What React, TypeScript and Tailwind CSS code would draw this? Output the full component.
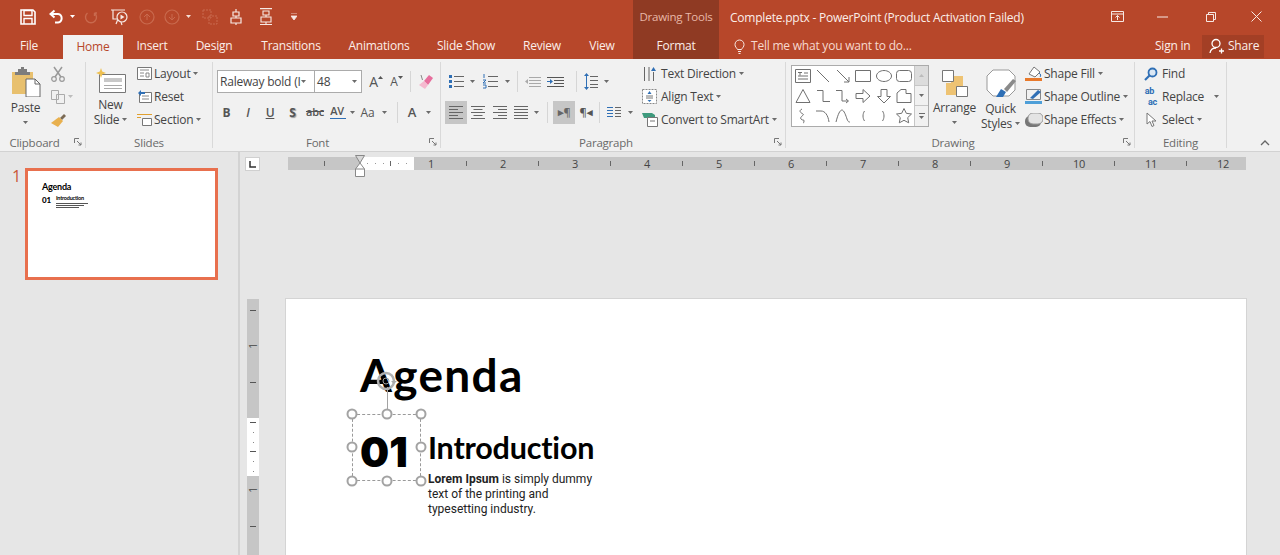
import type { ReactNode } from 'react';

const W = '#f7e9e4';
const G = '#5f5f5f';

function Svg({ w, h, children, className = '' }: { w: number; h: number; children: ReactNode; className?: string }) {
  return (
    <svg width={w} height={h} viewBox={`0 0 ${w} ${h}`} fill="none" className={`shrink-0 ${className}`}>
      {children}
    </svg>
  );
}

function Caret({ color = '#6b6b6b' }: { color?: string }) {
  return (
    <Svg w={5} h={3}>
      <path d="M0 0h5L2.500 3z" fill={color} />
    </Svg>
  );
}

function Launcher() {
  return (
    <Svg w={8} h={8}>
      <path d="M.5 5V.5H5" stroke="#777" />
      <path d="M3 3l4 4M7 4.500V7H4.500" stroke="#777" />
    </Svg>
  );
}

// one slot of a toolbar row, its width class sets where the icon lands
function Slot({ w, active, children }: { w: string; active?: boolean; children: ReactNode }) {
  return (
    <div className={`flex items-center justify-center shrink-0 h-[23px] ${w} ${active ? 'bg-[#c6c6c6]' : ''}`}>
      {children}
    </div>
  );
}

function Sep({ w }: { w: string }) {
  return (
    <div className={`flex justify-center shrink-0 ${w}`}>
      <div className="w-px h-[21px] bg-[#d6d6d6]" />
    </div>
  );
}

function Group({
  w,
  label,
  labelPad = '',
  launcher,
  children,
}: {
  w: string;
  label: string;
  labelPad?: string;
  launcher?: boolean;
  children: ReactNode;
}) {
  return (
    <div className={`flex shrink-0 h-full ${w}`}>
      <div className="flex-1 flex flex-col min-w-0">
        <div className="h-[75px] flex">{children}</div>
        <div className={`relative flex-1 flex items-center justify-center text-[11.5px] text-[#6a6a6a] pt-[2px] ${labelPad}`}>
          {label}
          {launcher && (
            <span className="absolute right-[3px] top-[6px] flex">
              <Launcher />
            </span>
          )}
        </div>
      </div>
      <div className="w-px h-[86px] mt-[2px] bg-[#d9d9d9]" />
    </div>
  );
}

function SmallRow({ icon, label, caret = true, iconW }: { icon: ReactNode; label: string; caret?: boolean; iconW: string }) {
  return (
    <div className="h-[23px] flex items-center text-[12px] text-[#444] whitespace-nowrap">
      <span className={`flex justify-center shrink-0 ${iconW}`}>{icon}</span>
      <span>{label}</span>
      {caret && (
        <span className="ml-[3px] flex">
          <Caret />
        </span>
      )}
    </div>
  );
}

function LargeLabel({ lines, caretLine }: { lines: string[]; caretLine?: boolean }) {
  return (
    <div className="flex flex-col items-center text-[12px] leading-[15px] text-[#444] mt-[3px]">
      {lines.map((l, i) => (
        <div key={l} className="flex items-center whitespace-nowrap">
          {l}
          {caretLine && i === lines.length - 1 && (
            <span className="ml-[3px] flex">
              <Caret />
            </span>
          )}
        </div>
      ))}
      {!caretLine && (
        <div className="h-[15px] flex items-center">
          <Caret />
        </div>
      )}
    </div>
  );
}

/* ---------- title bar icons ---------- */

function QuickAccess() {
  const dim = '#c96a4e';
  return (
    <div className="h-[33px] flex items-center">
      <div className="w-[20px] shrink-0" />
      <Svg w={16} h={16}>
        <path d="M1 1h12l2 2v12H1z" stroke="#fff" strokeWidth="1.600" />
        <path d="M4 1.500h8v5H4zM4 15V9.500h8V15" stroke="#fff" strokeWidth="1.400" />
      </Svg>
      <div className="w-[13px] shrink-0" />
      <Svg w={16} h={15}>
        <path d="M5.500 1.500L1.500 5l4 3.500" stroke="#fff" strokeWidth="2" />
        <path d="M2 5h7a4.300 4.300 0 010 8.500H6" stroke="#fff" strokeWidth="2" />
      </Svg>
      <div className="w-[5px] shrink-0" />
      <Caret color="#fff" />
      <div className="w-[9px] shrink-0" />
      <Svg w={14} h={14}>
        <path d="M3.500 3a5.500 5.500 0 107 0M10.500 3v3M10.500 3H13" stroke={dim} strokeWidth="1.400" />
      </Svg>
      <div className="w-[12px] shrink-0" />
      <Svg w={19} h={18}>
        <path d="M1 2h14M3 2v9h6M8 11l-2 5M11 14l1 3" stroke={W} strokeWidth="1.200" />
        <circle cx="12" cy="9" r="5" stroke={W} strokeWidth="1.200" fill="#b7472a" />
        <path d="M10.500 6.500l4 2.500-4 2.500z" fill={W} />
      </Svg>
      <div className="w-[10px] shrink-0" />
      <Svg w={16} h={16}>
        <circle cx="8" cy="8" r="7" stroke={dim} strokeWidth="1.200" />
        <path d="M5 8l3-3 3 3M8 5v6" stroke={dim} />
      </Svg>
      <div className="w-[9px] shrink-0" />
      <Svg w={16} h={16}>
        <circle cx="8" cy="8" r="7" stroke={dim} strokeWidth="1.200" />
        <path d="M5 8l3 3 3-3M8 11V5" stroke={dim} />
      </Svg>
      <div className="w-[6px] shrink-0" />
      <Caret color="#f5dfd6" />
      <div className="w-[11px] shrink-0" />
      <Svg w={16} h={16}>
        <path d="M1 1h8v8H1zM7 7h8v8H7z" stroke={dim} strokeDasharray="2 1" />
      </Svg>
      <div className="w-[12px] shrink-0" />
      <Svg w={12} h={16}>
        <path d="M6 0v3M6 7v2M6 14v2M3 3h6v4H3zM1 9h10v5H1z" stroke={W} strokeWidth="1.200" />
      </Svg>
      <div className="w-[18px] shrink-0" />
      <Svg w={12} h={17}>
        <path d="M0 .6h12M3 3h6v4H3zM1 9h10v5H1zM6 7v2M6 14v3M0 16.500h12" stroke={W} strokeWidth="1.100" />
      </Svg>
      <div className="w-[19px] shrink-0" />
      <Svg w={6} h={7}>
        <path d="M0 0h6M0 3h6L3 7z" stroke={W} fill={W} strokeWidth=".8" />
      </Svg>
    </div>
  );
}

function Tab({ w, label }: { w: string; label: string }) {
  return <div className={`text-[12px] text-[#fbeee9] text-center shrink-0 whitespace-nowrap ${w}`}>{label}</div>;
}

function WindowButtons() {
  return (
    <div className="flex items-center h-[33px]">
      <div className="w-[392px] shrink-0" />
      <Svg w={13} h={11}>
        <path d="M.5.500h12v10H.5zM.5 3h12" stroke={W} />
        <path d="M6.500 9V4.500M4.500 6.500l2-2 2 2" stroke={W} />
      </Svg>
      <div className="w-[33px] shrink-0" />
      <Svg w={11} h={2}>
        <path d="M0 1h11" stroke={W} />
      </Svg>
      <div className="w-[38px] shrink-0" />
      <Svg w={10} h={10}>
        <path d="M.5 2.500h7v7h-7zM2.500 2.500v-2h7v7h-2" stroke={W} />
      </Svg>
      <div className="w-[35px] shrink-0" />
      <Svg w={11} h={11}>
        <path d="M.5.500l10 10M10.500.500l-10 10" stroke={W} />
      </Svg>
    </div>
  );
}

function Header() {
  return (
    <div className="flex h-[59px] bg-[#b7472a] shrink-0">
      <div className="w-[633px] shrink-0 flex flex-col">
        <QuickAccess />
        <div className="flex items-center h-[26px]">
          <Tab w="w-[58px]" label="File" />
          <div className="w-[60px] h-[24px] mt-[2px] ml-[5px] bg-[#f1f1f1] text-[#b7472a] text-[12px] flex items-center justify-center shrink-0">
            Home
          </div>
          <Tab w="w-[58px]" label="Insert" />
          <Tab w="w-[66px]" label="Design" />
          <Tab w="w-[88px]" label="Transitions" />
          <Tab w="w-[88px]" label="Animations" />
          <Tab w="w-[86px]" label="Slide Show" />
          <Tab w="w-[66px]" label="Review" />
          <Tab w="w-[54px]" label="View" />
        </div>
      </div>
      <div className="w-[86px] shrink-0 bg-[#8f3a23] flex flex-col">
        <div className="h-[33px] flex items-center justify-center text-[11.5px] text-[#e8b8a8]">Drawing Tools</div>
        <div className="h-[26px] flex items-center justify-center text-[12px] text-[#fbeee9]">Format</div>
      </div>
      <div className="flex-1 flex flex-col min-w-0">
        <div className="relative h-[33px]">
          <div className="absolute left-[11px] top-[9px] text-[12px] text-[#fbeee9] whitespace-nowrap">
            Complete.pptx - PowerPoint (Product Activation Failed)
          </div>
          <WindowButtons />
        </div>
        <div className="h-[26px] flex items-center text-[12px] text-[#f6d9cf]">
          <div className="w-[15px] shrink-0" />
          <Svg w={11} h={15} className="mr-[6px]">
            <path d="M3.500 10.500C2.500 8.500 1 8 1 5.500a4.500 4.500 0 019 0c0 2.500-1.500 3-2.500 5zM4 12.500h3M4.500 14.500h2" stroke={W} />
          </Svg>
          <span className="whitespace-nowrap w-[404px] shrink-0">Tell me what you want to do...</span>
          <span className="text-[#fbeee9] whitespace-nowrap w-[47px] shrink-0">Sign in</span>
          <div className="w-[62px] h-[23px] bg-[#a33f25] flex items-center text-[#fbeee9] shrink-0">
            <Svg w={16} h={16} className="ml-[7px] mr-[3px]">
              <circle cx="7" cy="5.500" r="4" stroke="#fff" strokeWidth="1.300" />
              <path d="M1 15c.5-3.500 2.500-5 6-5M10 13h5M12.500 10.500v5" stroke="#fff" strokeWidth="1.300" />
            </Svg>
            Share
          </div>
        </div>
      </div>
    </div>
  );
}

/* ---------- ribbon icons ---------- */

const lines = (ys: number[], x1: number, x2: number, c = G) => (
  <path d={ys.map((y) => `M${x1} ${y}.5H${x2}`).join('')} stroke={c} />
);

function ListIcon({ kind }: { kind: 'bullet' | 'num' }) {
  return (
    <Svg w={16} h={15}>
      {lines([2, 7, 12], 6, 16, '#666')}
      {kind === 'bullet' ? (
        <path d="M1 1h3v3H1zM1 6h3v3H1zM1 11h3v3H1z" fill="#2f6fb5" />
      ) : (
        <path d="M2 0v4M1 6h3l-3 3h3M1 11h3v3H1" stroke="#2f6fb5" />
      )}
    </Svg>
  );
}

function AlignIcon({ kind }: { kind: 'l' | 'c' | 'r' | 'j' }) {
  const rows = [1, 4, 7, 10, 13];
  const long = [true, false, true, false, true];
  const d = rows
    .map((y, i) => {
      const len = long[i] || kind === 'j' ? 14 : 9;
      const x = kind === 'c' ? (14 - len) / 2 : kind === 'r' ? 14 - len : 0;
      return `M${x} ${y}.5h${len}`;
    })
    .join('');
  return (
    <Svg w={14} h={15}>
      <path d={d} stroke="#666" />
    </Svg>
  );
}

function Shape({ d }: { d: string }) {
  return (
    <div className="flex items-center justify-center w-[20px] h-[20px]">
      <Svg w={16} h={16}>
        <path d={d} stroke="#707070" />
      </Svg>
    </div>
  );
}

const shapes = [
  'M.5 1.500h15v13H.5zM3 4.500h4M5 4.500v3M9 5h4M3 8h10M3 11h10',
  'M2 2l12 12',
  'M2 2l12 12M14 9v5H9',
  'M.5 2.500h15v11H.5z',
  'M8 2.500c4 0 7.500 2.500 7.500 5.500s-3.500 5.500-7.500 5.500S.5 11 .5 8 4 2.500 8 2.500z',
  'M3.500 2.500h9a3 3 0 013 3v5a3 3 0 01-3 3h-9a3 3 0 01-3-3v-5a3 3 0 013-3z',
  'M8 1.500l7 13H1z',
  'M2 2.500h6v11h7',
  'M1 2.500h6v10.500h6M11 11l2.500 2-2.500 2',
  'M1 5.500h7v-4l7 6.500-7 6.500v-4H1z',
  'M5 1.500h6v7h3.500L8 15 1.500 8.500H5z',
  'M1 14.500V5l4-3.500h5v4h5v9z',
  'M7 1C3 3 6 5 8 6S4 9 6 11s3 0 3 2-1 2-1 2',
  'M1 3h5c4 0 7 4 8 11',
  'M1 14C3 6 5 2 7 2s4 6 5 9 2 3 3 3',
  'M9.500 3C7.500 6 7.500 10 9.500 13',
  'M6.500 3c2 3 2 7 0 10',
  'M8 .5l2.300 4.800 5.200.7-3.800 3.600 1 5.200L8 12.300l-4.700 2.500 1-5.200L.5 6l5.200-.7z',
];

function Gallery() {
  return (
    <div className="flex h-[62px] w-[138px] mt-[5px] ml-[5px] border border-[#ababab] bg-white">
      <div className="w-[122px] pl-[1px] grid grid-cols-6 auto-rows-[20px]">
        {shapes.map((d) => (
          <Shape key={d} d={d} />
        ))}
      </div>
      <div className="w-[14px] ml-auto flex flex-col border-l border-[#c6c6c6] bg-[#f1f1f1]">
        <div className="h-[20px] bg-[#dcdcdc] flex items-center justify-center border-b border-[#c6c6c6]">
          <Svg w={5} h={3}>
            <path d="M0 3h5L2.500 0z" fill="#bbb" />
          </Svg>
        </div>
        <div className="h-[20px] flex items-center justify-center border-b border-[#c6c6c6]">
          <Caret />
        </div>
        <div className="flex-1 flex flex-col gap-[2px] items-center justify-center">
          <div className="w-[6px] h-px bg-[#6b6b6b]" />
          <Caret />
        </div>
      </div>
    </div>
  );
}

function Ribbon() {
  return (
    <div className="flex h-[93px] shrink-0 bg-[#f1f1f1] border-b border-[#d2d2d2] pt-[1px]">
      <Group w="w-[86px]" label="Clipboard" labelPad="pr-[16px]" launcher>
        <div className="w-[51px] flex flex-col items-center pt-[7px]">
          <Svg w={30} h={30}>
            <path d="M1 5h21v22H1z" fill="#e8c06e" />
            <path d="M7 5V2h3V0h3v2h3v3h3v3H4V5z" fill="#7d7d7d" />
            <path d="M15 12h9l5 5v13H15z" fill="#fff" stroke="#666" />
            <path d="M24 12v5h5" stroke="#666" />
          </Svg>
          <LargeLabel lines={['Paste']} />
        </div>
        <div className="flex flex-col pt-[2px]">
          <Slot w="w-[14px]">
            <Svg w={14} h={16}>
              <path d="M3 1l7 10M11 1L4 11" stroke="#9a9a9a" strokeWidth="1.500" />
              <circle cx="3" cy="13" r="2.300" stroke="#9a9a9a" strokeWidth="1.200" />
              <circle cx="11" cy="13" r="2.300" stroke="#9a9a9a" strokeWidth="1.200" />
            </Svg>
          </Slot>
          <div className="flex items-center">
            <Slot w="w-[14px]">
              <Svg w={14} h={14}>
                <path d="M.5.500h7v9h-7zM5.500 4.500h8v9h-8z" stroke="#ababab" />
              </Svg>
            </Slot>
            <span className="ml-[3px] flex">
              <Caret color="#bdbdbd" />
            </span>
          </div>
          <Slot w="w-[14px]">
            <Svg w={16} h={14}>
              <path d="M10 5l4-4 2 2-4 4z" fill="#7b6a55" />
              <path d="M1 10l8-6 4 4-5 6z" fill="#e8b04e" />
            </Svg>
          </Slot>
        </div>
      </Group>

      <Group w="w-[127px]" label="Slides">
        <div className="w-[47px] ml-px flex flex-col items-center pt-[8px]">
          <Svg w={30} h={26}>
            <path d="M3.500 6.500h26v18h-26z" fill="#fff" stroke="#777" />
            <path d="M8 10h18v4H8z" fill="#c8c8c8" />
            <path d="M8 17.500h18M8 20.500h18" stroke="#aaa" />
            <path d="M5 0l1.200 3.500L10 5 6.200 6.500 5 10 3.800 6.500 0 5l3.800-1.500z" fill="#efc050" />
          </Svg>
          <LargeLabel lines={['New', 'Slide']} caretLine />
        </div>
        <div className="flex flex-col pt-[2px]">
          <SmallRow
            iconW="w-[20px]"
            label="Layout"
            icon={
              <Svg w={15} h={13}>
                <path d="M.5.500h14v12H.5z" fill="#fff" stroke="#777" />
                <path d="M3 3h9M3 6h4M3 9h4M9 6h3v4H9z" stroke="#888" />
              </Svg>
            }
          />
          <SmallRow
            iconW="w-[20px]"
            label="Reset"
            caret={false}
            icon={
              <Svg w={15} h={13}>
                <path d="M2.500 2.500h12v10h-12z" fill="#fff" stroke="#777" />
                <path d="M5 6h7M5 9h7" stroke="#888" />
                <path d="M1 3l3-3v2h4v2H4v2z" fill="#2f6fb5" />
              </Svg>
            }
          />
          <SmallRow
            iconW="w-[20px]"
            label="Section"
            icon={
              <Svg w={15} h={13}>
                <path d="M0 1.500h15M0 4.500h4" stroke="#e0a030" />
                <path d="M5.500 5.500h9v7h-9z" fill="#fff" stroke="#777" />
              </Svg>
            }
          />
        </div>
      </Group>

      <Group w="w-[228px]" label="Font" labelPad="pr-[18px]" launcher>
        <div className="flex flex-col pl-[3px] pt-[10px]">
          <div className="flex items-center h-[23px] whitespace-nowrap">
            <div className="flex w-[145px] h-[23px] ml-px bg-white border border-[#ababab] text-[12px] text-[#444]">
              <div className="w-[97px] border-r border-[#ababab] flex items-center pl-[2px] pr-[5px] overflow-hidden">
                <span className="overflow-hidden w-[81px] shrink-0">Raleway bold (I</span>
                <Caret />
              </div>
              <div className="flex-1 flex items-center justify-between pl-[2px] pr-[4px]">
                48
                <Caret />
              </div>
            </div>
            <Slot w="w-[22px]">
              <span className="text-[14px] text-[#555] ml-[6px]">A</span>
              <Svg w={5} h={3} className="mb-[8px]">
                <path d="M0 3h5L2.500 0z" fill="#555" />
              </Svg>
            </Slot>
            <Slot w="w-[21px]">
              <span className="text-[12px] text-[#555] ml-[4px]">A</span>
              <Svg w={5} h={3} className="mb-[8px]">
                <path d="M0 0h5L2.500 3z" fill="#555" />
              </Svg>
            </Slot>
            <Sep w="w-[10px]" />
            <Slot w="w-[20px]">
              <Svg w={15} h={15}>
                <path d="M6 7l5-6 4 3-5 7z" fill="#e76e9d" />
                <path d="M6 7l4 4-3 4-6-4z" fill="#f5b9cf" />
                <path d="M3 1l1.500 5" stroke="#888" />
              </Svg>
            </Slot>
          </div>
          <div className="flex items-center h-[23px] mt-[8px] text-[12px] text-[#555] whitespace-nowrap">
            <Slot w="w-[21px]"><b>B</b></Slot>
            <Slot w="w-[22px]"><i className="font-semibold">I</i></Slot>
            <Slot w="w-[22px]"><u className="font-semibold">U</u></Slot>
            <Slot w="w-[23px]"><b className="[text-shadow:1px_1px_1px_#999]">S</b></Slot>
            <Slot w="w-[22px]"><s className="text-[11px] font-semibold">abc</s></Slot>
            <Slot w="w-[22px]">
              <span className="relative font-semibold text-[11px] -mt-[3px]">
                AV
                <Svg w={16} h={3} className="absolute left-0 top-[14px]">
                  <path d="M0 1.500h16" stroke="#2f6fb5" />
                </Svg>
              </span>
            </Slot>
            <Slot w="w-[9px]"><Caret /></Slot>
            <Slot w="w-[21px]">Aa</Slot>
            <Slot w="w-[12px]"><Caret /></Slot>
            <Sep w="w-[14px]" />
            <Slot w="w-[16px]"><span className="font-semibold text-[13px]">A</span></Slot>
            <Slot w="w-[16px]"><Caret /></Slot>
          </div>
        </div>
      </Group>

      <Group w="w-[345px]" label="Paragraph" labelPad="pr-[14px]" launcher>
        <div className="flex flex-col pl-[4px] pt-[10px] w-[199px] shrink-0">
          <div className="flex items-center h-[23px]">
            <Slot w="w-[22px]"><ListIcon kind="bullet" /></Slot>
            <Slot w="w-[10px]"><Caret /></Slot>
            <Slot w="w-[26px]"><ListIcon kind="num" /></Slot>
            <Slot w="w-[8px]"><Caret /></Slot>
            <Sep w="w-[12px]" />
            <Slot w="w-[18px]">
              <Svg w={17} h={12}>
                {lines([1, 4, 7, 10], 5, 17, '#a9a9a9')}
                <path d="M4 3L1 5.500 4 8z" fill="#a9a9a9" />
              </Svg>
            </Slot>
            <Slot w="w-[28px]">
              <Svg w={17} h={12}>
                {lines([1, 10], 0, 17, '#555')}
                {lines([4, 7], 7, 17, '#555')}
                <path d="M0 5.500h4" stroke="#2f6fb5" />
                <path d="M3 3l3 2.500L3 8z" fill="#2f6fb5" />
              </Svg>
            </Slot>
            <Sep w="w-[14px]" />
            <Slot w="w-[16px]">
              <Svg w={14} h={17}>
                <path d="M2.500 1v15" stroke="#2f6fb5" />
                <path d="M0 3l2.500-3L5 3zM0 14l2.500 3L5 14z" fill="#2f6fb5" />
                {lines([3, 7, 11, 14], 6, 14, '#666')}
              </Svg>
            </Slot>
            <Slot w="w-[14px]"><Caret /></Slot>
          </div>
          <div className="flex items-center h-[23px] mt-[8px]">
            <Slot w="w-[22px]" active><AlignIcon kind="l" /></Slot>
            <Slot w="w-[22px]"><AlignIcon kind="c" /></Slot>
            <Slot w="w-[22px]"><AlignIcon kind="r" /></Slot>
            <Slot w="w-[20px]"><AlignIcon kind="j" /></Slot>
            <Slot w="w-[10px]"><Caret /></Slot>
            <Sep w="w-[12px]" />
            <Slot w="w-[22px]" active>
              <span className="text-[11px] text-[#666] font-semibold">▸¶</span>
            </Slot>
            <Slot w="w-[22px]">
              <span className="text-[11px] text-[#555] font-semibold">¶◂</span>
            </Slot>
            <Sep w="w-[5px]" />
            <Slot w="w-[24px]">
              <Svg w={14} h={11}>
                {lines([0, 3, 6, 9], 0, 6, '#2f6fb5')}
                {lines([0, 3, 6, 9], 8, 14, '#666')}
              </Svg>
            </Slot>
            <Slot w="w-[8px]"><Caret /></Slot>
          </div>
        </div>
        <div className="flex flex-col pt-[2px] ml-[-2px]">
          <SmallRow
            iconW="w-[23px]"
            label="Text Direction"
            icon={
              <Svg w={15} h={16}>
                <path d="M2.500 1v14M7 1v14M11.500 6v9" stroke="#666" />
                <path d="M9 5l2.500-4L14 5z" fill="#2f6fb5" />
              </Svg>
            }
          />
          <SmallRow
            iconW="w-[23px]"
            label="Align Text"
            icon={
              <Svg w={15} h={15}>
                <path d="M.5.500h14v14H.5z" fill="#fff" stroke="#888" strokeDasharray="2 1" />
                <path d="M4 7h7M4 9h7" stroke="#777" />
                <path d="M7.500 2l2 3h-4zM7.500 13l2-2h-4z" fill="#2f6fb5" />
              </Svg>
            }
          />
          <SmallRow
            iconW="w-[23px]"
            label="Convert to SmartArt"
            icon={
              <Svg w={16} h={15}>
                <path d="M0 1h10l3 2v3H2z" fill="#3e9a7d" />
                <path d="M5.500 5.500h10v9h-10z" fill="#fff" stroke="#777" />
                <path d="M8 9h5" stroke="#777" />
              </Svg>
            }
          />
        </div>
      </Group>

      <Group w="w-[349px]" label="Drawing" labelPad="pr-[14px]" launcher>
        <Gallery />
        <div className="w-[53px] ml-[-1px] flex flex-col items-center pt-[9px] shrink-0">
          <Svg w={28} h={28}>
            <path d="M10 7h12v13H10z" fill="#eec373" />
            <path d="M5 14h12v12H5z" fill="#eec373" />
            <path d="M1.500 1.500h11v11h-11z" fill="#fff" stroke="#777" />
            <path d="M15.500 17.500h11v10h-11z" fill="#fff" stroke="#777" />
          </Svg>
          <LargeLabel lines={['Arrange']} />
        </div>
        <div className="w-[39px] flex flex-col items-center pt-[9px] shrink-0">
          <Svg w={30} h={29}>
            <path d="M7 1h16l6 6v14l-6 6H7l-6-6V7z" fill="#fff" stroke="#999" />
            <path d="M10 28l5-8 5 3-3 5z" fill="#2f6fb5" />
            <path d="M18 20l9-10 3 2-9 11z" fill="#8a8a8a" />
          </Svg>
          <LargeLabel lines={['Quick', 'Styles']} caretLine />
        </div>
        <div className="flex flex-col pt-[2px] ml-[3px]">
          <SmallRow
            iconW="w-[21px]"
            label="Shape Fill"
            icon={
              <Svg w={18} h={17}>
                <path d="M4 9l5-7 6 5-5 5z" fill="#fff" stroke="#777" />
                <path d="M14 8c2 1 2 3 1 4" stroke="#2f6fb5" />
                <path d="M0 13h17v3H0z" fill="#e8792b" />
              </Svg>
            }
          />
          <SmallRow
            iconW="w-[21px]"
            label="Shape Outline"
            icon={
              <Svg w={18} h={17}>
                <path d="M1.500 1.500h14v10h-14z" stroke="#888" />
                <path d="M5 10l8-8 3 2-8 7z" fill="#2f6fb5" />
                <path d="M0 13h17v3H0z" fill="#4e9fd8" />
              </Svg>
            }
          />
          <SmallRow
            iconW="w-[21px]"
            label="Shape Effects"
            icon={
              <Svg w={18} h={14}>
                <rect x="0" y="3" width="16" height="11" rx="5" fill="#777" />
                <rect x="3" y="0" width="15" height="11" rx="5" fill="#e4e4e4" stroke="#999" />
              </Svg>
            }
          />
        </div>
      </Group>

      <Group w="w-[92px]" label="Editing">
        <div className="flex flex-col pt-[2px] pl-[5px]">
          <SmallRow
            iconW="w-[22px]"
            label="Find"
            caret={false}
            icon={
              <Svg w={14} h={14}>
                <circle cx="8.500" cy="5.500" r="4" fill="#dbe8f5" stroke="#2f6fb5" strokeWidth="1.800" />
                <path d="M5.500 8.500L1 13" stroke="#2f6fb5" strokeWidth="2.200" />
              </Svg>
            }
          />
          <div className="flex items-center">
            <SmallRow
              iconW="w-[22px]"
              label="Replace"
              caret={false}
              icon={
                <span className="flex flex-col items-center font-['Roboto',sans-serif] text-[9px] leading-[11px] font-bold text-[#2f6fb5]">
                  <span className="-ml-[3px]">ab</span>
                  <span className="ml-[3px]">ac</span>
                </span>
              }
            />
            <span className="ml-[10px] flex">
              <Caret />
            </span>
          </div>
          <SmallRow
            iconW="w-[22px]"
            label="Select"
            icon={
              <Svg w={11} h={15}>
                <path d="M1 1v11l3-2.500 2 5 2-1-2-4.500h4z" fill="#fff" stroke="#777" />
              </Svg>
            }
          />
        </div>
      </Group>

      <div className="flex-1 flex items-end justify-end pr-[10px] pb-[5px]">
        <Svg w={10} h={6}>
          <path d="M1 5l4-4 4 4" stroke="#666" strokeWidth="1.300" />
        </Svg>
      </div>
    </div>
  );
}

/* ---------- rulers ---------- */

function HRuler() {
  const nums = [1, 2, 3, 4, 5, 6, 7, 8, 9, 10, 11, 12];
  return (
    <div className="flex h-[13px] w-[958px] bg-[#c6c6c6] text-[11px] leading-[13px] text-[#444]">
      <div className="w-[72px] shrink-0 flex items-center justify-center">
        <div className="w-px h-[5px] bg-[#666]" />
      </div>
      <div className="w-[54px] shrink-0 bg-white flex items-center justify-around px-[4px]">
        <div className="w-px h-px bg-[#999]" />
        <div className="w-px h-px bg-[#999]" />
        <div className="w-px h-px bg-[#999]" />
        <div className="w-px h-[5px] bg-[#666]" />
        <div className="w-px h-px bg-[#999]" />
        <div className="w-px h-px bg-[#999]" />
      </div>
      <div className="flex-1 flex min-w-0 overflow-hidden">
        <div className="flex shrink-0 -ml-[19px]">
          {nums.map((n) => (
            <div key={n} className="relative w-[72px] text-center">
              {n}
              <div className="absolute right-0 top-[4px] w-px h-[5px] bg-[#666]" />
            </div>
          ))}
        </div>
      </div>
    </div>
  );
}

function VCell({ num }: { num?: boolean }) {
  return (
    <div className="h-[36px] shrink-0 flex items-center justify-center">
      {num ? <span className="-rotate-90 text-[10px] leading-[10px] text-[#444]">1</span> : <div className="w-[6px] h-px bg-[#555]" />}
    </div>
  );
}

function VRuler() {
  return (
    <div className="w-[12px] flex flex-col h-[256px] bg-[#c6c6c6] shrink-0 overflow-hidden">
      <div className="h-[119px] shrink-0 overflow-hidden">
        <div className="-mt-[7px]">
          <VCell />
          <VCell num />
          <VCell />
        </div>
      </div>
      <div className="h-[58px] shrink-0 bg-white flex flex-col items-center justify-between py-[4px]">
        <div className="w-[6px] h-px bg-[#555]" />
        <div className="w-px h-px bg-[#888]" />
        <div className="w-px h-px bg-[#888]" />
        <div className="w-[6px] h-px bg-[#555]" />
        <div className="w-px h-px bg-[#888]" />
        <div className="w-px h-px bg-[#888]" />
      </div>
      <div className="flex-1 min-h-0">
        <div className="-mt-[4px]">
          <VCell num />
          <VCell />
        </div>
      </div>
    </div>
  );
}

/* ---------- slide canvas ---------- */

function Handle({ x, y }: { x: number; y: number }) {
  return (
    <div
      className="absolute w-[11px] h-[11px] rounded-full bg-white border-2 border-[#a3a3a3] -translate-x-1/2 -translate-y-1/2"
      style={{ left: x, top: y }}
    />
  );
}

function Slide() {
  const handles = [
    [66, 115],
    [101, 115],
    [135, 115],
    [66, 148],
    [135, 148],
    [66, 182],
    [101, 182],
    [135, 182],
  ];
  return (
    <div className="relative flex-1 h-[260px] bg-white border border-[#d4d4d4] tracking-normal">
      <div className="absolute left-[74px] top-[48px] font-['Lato',sans-serif] font-bold text-[46px] leading-[56px] tracking-[1.3px] text-black">
        Agenda
      </div>
      <div className="absolute left-[74px] top-[128px] font-['Inter',sans-serif] font-black text-[41px] leading-[50px] text-black">
        01
      </div>
      <div className="absolute left-[142px] top-[129px] font-['Lato',sans-serif] font-bold text-[30.5px] leading-[38px] tracking-[-0.2px] text-black">
        Introduction
      </div>
      <div className="absolute left-[142px] top-[173px] w-[172px] font-['Roboto',sans-serif] text-[12px] leading-[15px] text-[#222]">
        <b>Lorem Ipsum</b> is simply dummy text of the printing and typesetting industry.
      </div>

      <div className="absolute left-[66px] top-[115px] w-[69px] h-[67px] border border-dashed border-[#9a9a9a]" />
      <div className="absolute left-[101px] top-[88px] w-px h-[27px] bg-[#a3a3a3]" />
      <Svg w={22} h={20} className="absolute left-[90px] top-[72px]">
        <circle cx="10" cy="10" r="8" stroke="#b0b0b0" strokeWidth="2.500" />
        <circle cx="10" cy="10" r="3" stroke="#a0a0a0" />
        <path d="M15 10h6l-3 3z" fill="#aaa" />
      </Svg>
      {handles.map(([x, y]) => (
        <Handle key={`${x}-${y}`} x={x} y={y} />
      ))}
    </div>
  );
}

function Thumbnail() {
  return (
    <div className="flex pt-[16px]">
      <div className="w-[24px] shrink-0 pl-[12px] text-[16px] leading-[17px] text-[#c9573a]">1</div>
      <div className="w-[193px] h-[112px] ml-px border-[3px] border-[#e8704e] bg-white shrink-0 pl-[14px] pt-[10px] font-['Lato',sans-serif]">
        <div className="text-[9px] leading-[12px] font-bold text-black">Agenda</div>
        <div className="flex mt-[2px]">
          <div className="text-[8px] leading-[10px] font-black text-black w-[14px]">01</div>
          <div className="flex flex-col gap-[1px]">
            <div className="text-[5.500px] leading-[7px] font-bold text-black">Introduction</div>
            <div className="w-[32px] h-px bg-[#555]" />
            <div className="w-[28px] h-px bg-[#555]" />
            <div className="w-[23px] h-px bg-[#555]" />
          </div>
        </div>
      </div>
    </div>
  );
}

export default function App() {
  return (
    <div className="w-[1280px] h-[555px] overflow-hidden flex flex-col bg-[#e6e6e6] font-['Open_Sans',sans-serif] tracking-[-0.22px]">
      <Header />
      <Ribbon />
      <div className="flex flex-1 min-h-0">
        <div className="w-[238px] shrink-0">
          <Thumbnail />
        </div>
        <div className="w-[2px] bg-[#d3d3d3] shrink-0" />
        <div className="flex-1 flex flex-col min-w-0 pt-[5px]">
          <div className="flex items-start">
            <div className="w-[48px] shrink-0">
              <div className="ml-[5px] w-[15px] h-[14px] bg-white border border-[#d0d0d0] flex items-center justify-center">
                <Svg w={7} h={7}>
                  <path d="M1 0v6h6" stroke="#333" strokeWidth="1.500" />
                </Svg>
              </div>
            </div>
            <div className="relative">
              <HRuler />
              <Svg w={10} h={22} className="absolute left-[67px] -top-[2px]">
                <path d="M.5.500h9L5 8z" fill="#d8d8d8" stroke="#888" />
                <path d="M5 8l4.500 6v7.500h-9V14z" fill="#fff" stroke="#888" />
                <path d="M.5 14h9" stroke="#888" />
              </Svg>
            </div>
          </div>
          <div className="flex items-start mt-[128px] pl-[7px] pr-[33px]">
            <VRuler />
            <div className="w-[26px] shrink-0" />
            <div className="flex-1 -mt-[1px]">
              <Slide />
            </div>
          </div>
        </div>
      </div>
    </div>
  );
}
